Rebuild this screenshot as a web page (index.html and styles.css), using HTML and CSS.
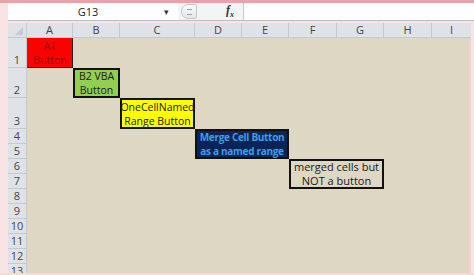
FILE: index.html
```html
<!DOCTYPE html>
<html lang="en">
<head>
    <meta charset="UTF-8">
    <title>Sheet buttons</title>
    <link rel="stylesheet" href="styles.css">
</head>
<body>
    <div class="window">
        <div class="formula-bar">
            <div class="name-box">
                <span class="cell-ref">G13</span>
                <span class="arrow">&#9662;</span>
            </div>
            <div class="fx-area">
                <span class="expand"><span class="lines"></span></span>
                <span class="fx">f<sub>x</sub></span>
            </div>
            <div class="formula-input"></div>
        </div>
        <div class="sheet">
            <div class="corner"><span class="tri"></span></div>
            <div class="col-head">A</div>
            <div class="col-head">B</div>
            <div class="col-head">C</div>
            <div class="col-head">D</div>
            <div class="col-head">E</div>
            <div class="col-head">F</div>
            <div class="col-head">G</div>
            <div class="col-head">H</div>
            <div class="col-head last">I</div>

            <div class="row-head r1">1</div>
            <div class="row-head r2">2</div>
            <div class="row-head r3">3</div>
            <div class="row-head r4">4</div>
            <div class="row-head r5">5</div>
            <div class="row-head r6">6</div>
            <div class="row-head r7">7</div>
            <div class="row-head r8">8</div>
            <div class="row-head r9">9</div>
            <div class="row-head r10">10</div>
            <div class="row-head r11">11</div>
            <div class="row-head r12">12</div>
            <div class="row-head r13">13</div>

            <div class="btn btn-a1">A1<br>Button</div>
            <div class="btn btn-b2">B2 VBA<br>Button</div>
            <div class="btn btn-c3">OneCellNamed<br>Range Button</div>
            <div class="btn btn-d4">Merge Cell Button<br>as a named range</div>
            <div class="btn btn-f6">merged cells but<br>NOT a button</div>
        </div>
    </div>
</body>
</html>
```

FILE: styles.css
```css
body {
    margin: 0;
    padding: 0;
    background-color: #f6dcd0;
    font-family: "Open Sans", "Liberation Sans", sans-serif;
    overflow: hidden;
}
.window {
    border-top: 3px solid #e6a4aa;
    padding-left: 8px;
    height: 270px;
    overflow: hidden;
    background-color: #f8e4e4;
}
.formula-bar {
    display: flex;
    height: 17px;
    border-bottom: 1px solid #b8bec8;
    background-color: #f3f4f6;
}
.name-box {
    width: 170px;
    background-color: #fff;
    display: flex;
    align-items: center;
    font-size: 11px;
    color: #222;
}
.cell-ref {
    flex: 1;
    text-align: center;
    padding-left: 4px;
}
.arrow {
    font-size: 9px;
    color: #333;
    width: 14px;
}
.fx-area {
    width: 65px;
    display: flex;
    align-items: center;
    justify-content: space-between;
    padding: 0 9px 0 3px;
    box-sizing: border-box;
}
.expand {
    width: 14px;
    height: 13px;
    border: 1px solid #c4c8ce;
    border-radius: 7px 2px 2px 7px;
    background: linear-gradient(#fbfbfb, #e4e6e9);
    display: flex;
    align-items: center;
    justify-content: center;
}
.lines {
    width: 5px;
    height: 4px;
    border-top: 1px solid #9aa0a8;
    border-bottom: 1px solid #9aa0a8;
}
.fx {
    font-family: "Liberation Serif", serif;
    font-style: italic;
    font-weight: bold;
    font-size: 12px;
    color: #333;
}
.fx sub {
    font-size: 8px;
}
.formula-input {
    flex: 1;
    background-color: #fff;
    border-left: 1px solid #c6cad0;
}
.sheet {
    margin-top: 2px;
    display: grid;
    grid-template-columns: 19px 46px 47px 75px 47px 47px 48px 47px 48px 39px;
    grid-template-rows: 15px 30px 30px 31px 15px 15px 15px 15px 15px 15px 15px 15px 15px 15px;
    background-color: #ddd7c3;
    width: 461px;
    border-right: 2px solid #f1d4cc;
}
.corner {
    background-color: #dfe3e8;
    border-right: 1px solid #c5cad2;
    border-bottom: 1px solid #c5cad2;
    position: relative;
}
.tri {
    position: absolute;
    right: 3px;
    bottom: 2px;
    width: 0;
    height: 0;
    border-left: 8px solid transparent;
    border-bottom: 8px solid #c6cbd2;
}
.col-head {
    background-color: #dfe3e8;
    border-right: 1px solid #c5cad2;
    border-bottom: 1px solid #c5cad2;
    font-size: 11px;
    color: #444;
    text-align: center;
    line-height: 14px;
}
.col-head.last {
    border-right: none;
}
.row-head {
    grid-column: 1;
    background-color: #dfe3e8;
    border-right: 1px solid #c5cad2;
    border-bottom: 1px solid #c5cad2;
    font-size: 11px;
    color: #444;
    display: flex;
    align-items: flex-end;
    justify-content: center;
    line-height: 14px;
}
.r1 { grid-row: 2; }
.r2 { grid-row: 3; }
.r3 { grid-row: 4; }
.r4 { grid-row: 5; }
.r5 { grid-row: 6; }
.r6 { grid-row: 7; }
.r7 { grid-row: 8; }
.r8 { grid-row: 9; }
.r9 { grid-row: 10; }
.r10 { grid-row: 11; }
.r11 { grid-row: 12; }
.r12 { grid-row: 13; }
.r13 { grid-row: 14; align-items: flex-start; }
.btn {
    display: flex;
    align-items: center;
    justify-content: center;
    text-align: center;
    font-size: 10.5px;
    line-height: 14px;
    white-space: nowrap;
    border: 1px solid #111;
    box-sizing: border-box;
    color: #1a1a1a;
}
.btn-a1 {
    grid-column: 2;
    grid-row: 2;
    background-color: #fe0000;
    color: #8a0a0a;
    border-color: #ff0000 #222 #222 #ff0000;
}
.btn-b2 {
    grid-column: 3;
    grid-row: 3;
    background-color: #92cf50;
    border-width: 2px;
}
.btn-c3 {
    grid-column: 4;
    grid-row: 4;
    background-color: #ffff00;
    border-width: 2px;
}
.btn-d4 {
    grid-column: 5 / span 2;
    grid-row: 5 / span 2;
    background-color: #0b2458;
    color: #3a9fe6;
    font-weight: bold;
    font-size: 10px;
    letter-spacing: -0.3px;
    border-width: 2px;
}
.btn-f6 {
    grid-column: 7 / span 2;
    grid-row: 7 / span 2;
    border-width: 2px;
    font-size: 11px;
}
```
